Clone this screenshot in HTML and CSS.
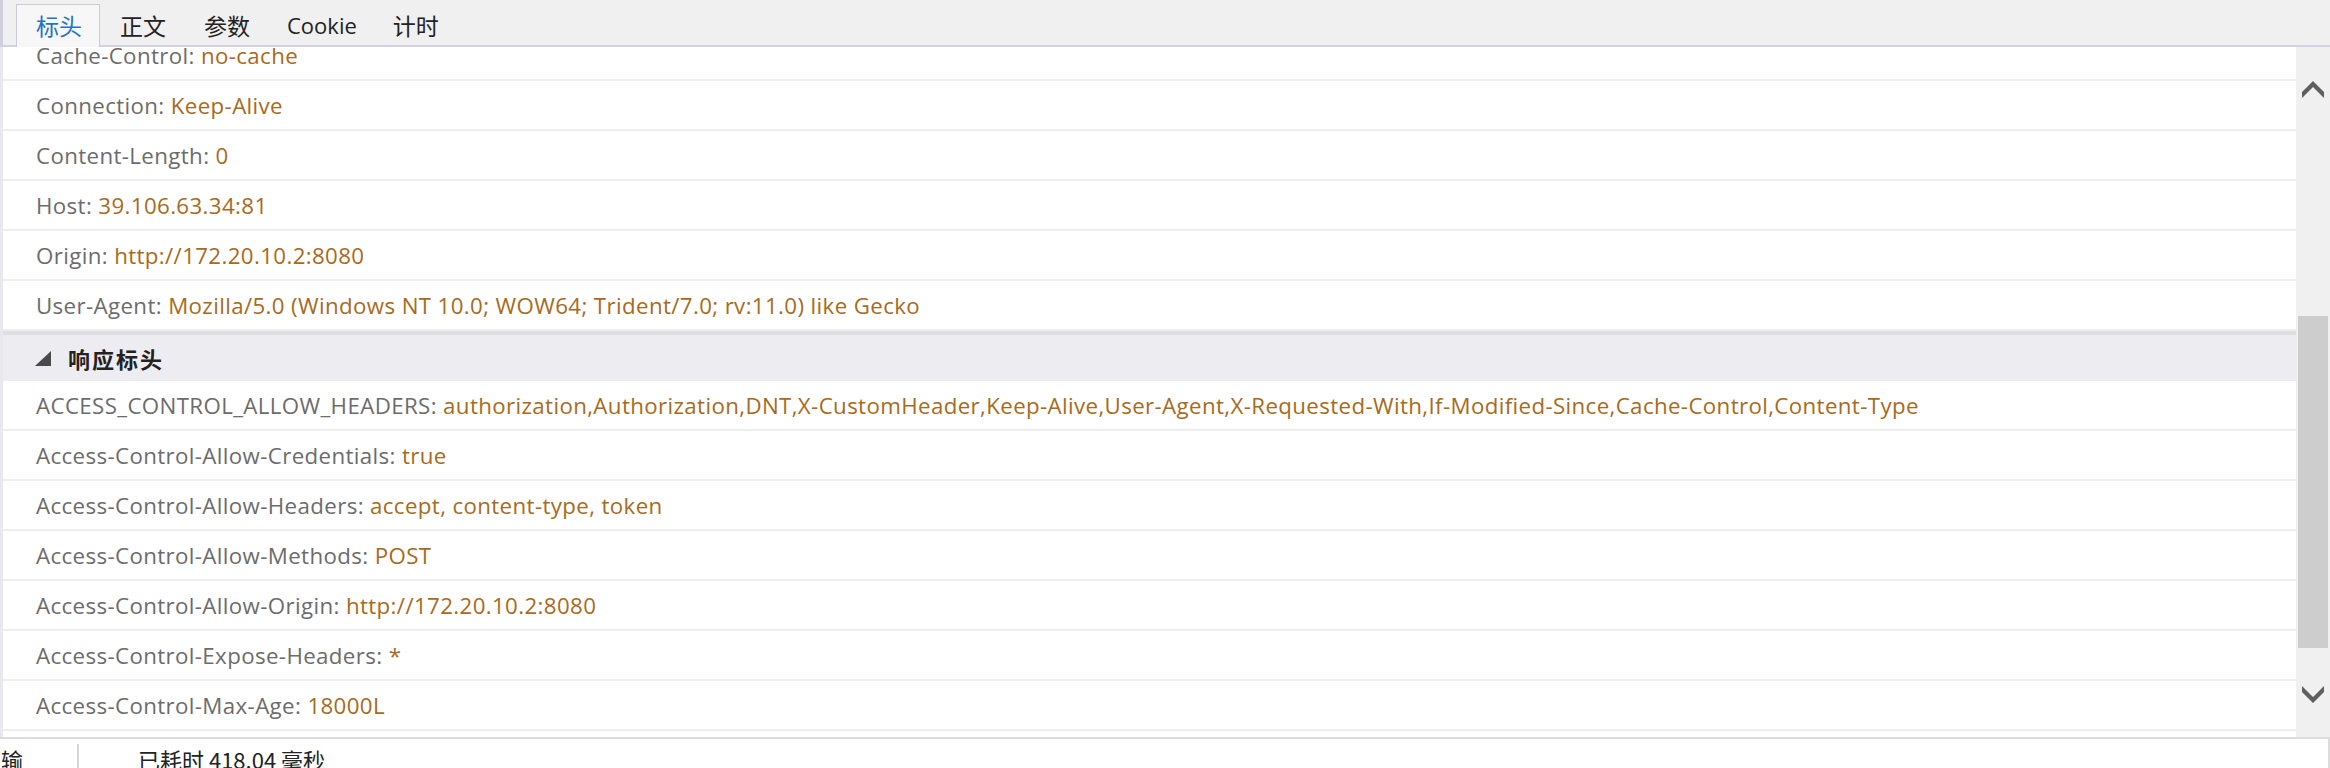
FILE: index.html
```html
<!DOCTYPE html>
<html lang="zh-CN">
<head>
<meta charset="utf-8">
<title>标头</title>
<link rel="stylesheet" href="styles.css">
</head>
<body>
<div class="app">
  <div class="tabbar">
    <div class="tab active">标头</div>
    <div class="tab">正文</div>
    <div class="tab">参数</div>
    <div class="tab latin">Cookie</div>
    <div class="tab">计时</div>
  </div>
  <div class="main">
    <div class="list">
      <div class="rows">
        <div class="row"><span class="k">Cache-Control:</span> <span class="v">no-cache</span></div>
        <div class="row"><span class="k">Connection:</span> <span class="v">Keep-Alive</span></div>
        <div class="row"><span class="k">Content-Length:</span> <span class="v">0</span></div>
        <div class="row"><span class="k">Host:</span> <span class="v">39.106.63.34:81</span></div>
        <div class="row"><span class="k">Origin:</span> <span class="v">http://172.20.10.2:8080</span></div>
        <div class="row"><span class="k">User-Agent:</span> <span class="v">Mozilla/5.0 (Windows NT 10.0; WOW64; Trident/7.0; rv:11.0) like Gecko</span></div>
        <div class="section">
          <svg class="tri" width="16" height="15" viewBox="0 0 16 15"><polygon points="16,0 16,15 0,15" fill="#4a4a4a"/></svg>
          <span class="section-title">响应标头</span>
        </div>
        <div class="row"><span class="k">ACCESS_CONTROL_ALLOW_HEADERS:</span> <span class="v">authorization,Authorization,DNT,X-CustomHeader,Keep-Alive,User-Agent,X-Requested-With,If-Modified-Since,Cache-Control,Content-Type</span></div>
        <div class="row"><span class="k">Access-Control-Allow-Credentials:</span> <span class="v">true</span></div>
        <div class="row"><span class="k">Access-Control-Allow-Headers:</span> <span class="v">accept, content-type, token</span></div>
        <div class="row"><span class="k">Access-Control-Allow-Methods:</span> <span class="v">POST</span></div>
        <div class="row"><span class="k">Access-Control-Allow-Origin:</span> <span class="v">http://172.20.10.2:8080</span></div>
        <div class="row"><span class="k">Access-Control-Expose-Headers:</span> <span class="v">*</span></div>
        <div class="row"><span class="k">Access-Control-Max-Age:</span> <span class="v">18000L</span></div>
        <div class="row"><span class="k">Content-Type:</span> <span class="v">application/json;charset=UTF-8</span></div>
      </div>
    </div>
    <div class="scrollbar">
      <svg class="arrow" width="22" height="17" viewBox="0 0 22 17"><polygon points="0,11 11,0 22,11 22,17 11,6 0,17" fill="#5f5f5f"/></svg>
      <div class="thumb" style="margin-top:218px;height:332px"></div>
      <svg class="arrow down" width="22" height="17" viewBox="0 0 22 17"><polygon points="0,0 11,11 22,0 22,6 11,17 0,6" fill="#5f5f5f"/></svg>
    </div>
  </div>
  <div class="footer">
    <span class="f-label">输</span>
    <span class="f-divider"></span>
    <span class="f-time">已耗时 418.04 毫秒</span>
  </div>
</div>
</body>
</html>
```

FILE: styles.css
```css
* { box-sizing: border-box; }

html, body {
  margin: 0;
  padding: 0;
  background: #ffffff;
}

body {
  width: 2330px;
  height: 768px;
  overflow: hidden;
  font-family: "Open Sans", "Noto Sans CJK SC", sans-serif;
}

.app {
  display: flex;
  flex-direction: column;
  width: 2330px;
  height: 768px;
}

/* ---------- tab bar ---------- */
.tabbar {
  display: flex;
  align-items: flex-end;
  height: 47px;
  flex: 0 0 47px;
  padding-left: 13px;
  background: #f0f0f0;
  border-left: 3px solid #d0d0dc;
  border-bottom: 2px solid #d2d2e2;
}

.tab {
  height: 43px;
  margin-bottom: -2px;
  padding: 0 17px 0 19px;
  border: 1px solid transparent;
  border-bottom: 0;
  font-family: "Noto Sans CJK SC", sans-serif;
  font-size: 23px;
  line-height: 40px;
  color: #222222;
}

.tab.latin {
  font-family: "Open Sans", "Noto Sans CJK SC", sans-serif;
  font-size: 22px;
  padding: 0 15px 0 18px;
}

.tab.active {
  color: #1f74c6;
  background: #f7f7f7;
  border-color: #c9ccd8;
}

/* ---------- main ---------- */
.main {
  display: flex;
  height: 690px;
  flex: 0 0 690px;
}

.list {
  flex: 1 1 auto;
  overflow: hidden;
  border-left: 3px solid #e8e8ee;
  background: #ffffff;
}

.rows {
  margin-top: -16px;
}

.row {
  height: 50px;
  padding-left: 33px;
  padding-top: 1px;
  border-bottom: 2px solid #eeeeee;
  font-size: 22.3px;
  line-height: 47px;
  letter-spacing: 0.37px;
  white-space: nowrap;
}

.k { color: #6c6c6c; }
.v { color: #a96a20; }

.section {
  display: flex;
  align-items: center;
  height: 50px;
  padding-left: 32px;
  background: #ececf1;
  border-top: 4px solid #dedee4;
}

.tri {
  flex: 0 0 auto;
  margin-top: 1px;
}

.section-title {
  margin-left: 17px;
  font-family: "Noto Sans CJK SC", sans-serif;
  font-weight: 700;
  font-size: 22px;
  letter-spacing: 2px;
  color: #222222;
}

/* ---------- scrollbar ---------- */
.scrollbar {
  display: flex;
  flex-direction: column;
  align-items: center;
  width: 34px;
  flex: 0 0 34px;
  padding-top: 34px;
  background: #f0f0f0;
}

.arrow { display: block; }

.arrow.down { margin-top: 38px; }

.thumb {
  width: 30px;
  background: #cdcdcd;
}

/* ---------- footer ---------- */
.footer {
  display: flex;
  align-items: flex-start;
  flex: 1 1 auto;
  padding-top: 5px;
  background: #ffffff;
  border-top: 2px solid #dcdcdc;
  border-right: 2px solid #dcdcdc;
  font-family: "Noto Sans CJK SC", sans-serif;
  font-size: 22px;
  line-height: 30px;
  color: #222222;
}

.f-label {
  padding-left: 1px;
}

.f-divider {
  align-self: stretch;
  width: 2px;
  margin-left: 54px;
  background: #d6d6d6;
}

.f-time {
  margin-left: 59px;
  white-space: nowrap;
}
```
